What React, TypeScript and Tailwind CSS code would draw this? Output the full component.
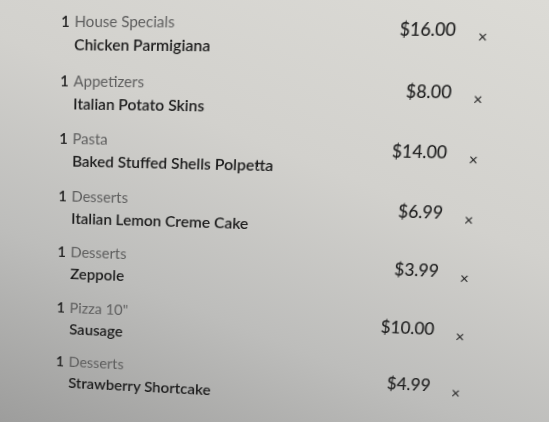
import React from "react";

const items = [
  { cat: "House Specials", name: "Chicken Parmigiana", price: "$16.00" },
  { cat: "Appetizers", name: "Italian Potato Skins", price: "$8.00" },
  { cat: "Pasta", name: "Baked Stuffed Shells Polpetta", price: "$14.00" },
  { cat: "Desserts", name: "Italian Lemon Creme Cake", price: "$6.99" },
  { cat: "Desserts", name: "Zeppole", price: "$3.99" },
  { cat: "Pizza 10\"", name: "Sausage", price: "$10.00" },
  { cat: "Desserts", name: "Strawberry Shortcake", price: "$4.99" },
];

export default function App() {
  return (
    <div
      className="w-[549px] h-[422px] overflow-hidden bg-[linear-gradient(22deg,#9d9d9c_0%,#bdbdbb_30%,#d2d1cd_60%,#dcdbd6_100%)]"
      style={{ fontFamily: "Lato, 'Open Sans', sans-serif" }}
    >
      <div className="mt-[14px] w-[549px] h-[410px] origin-center [transform:perspective(1000px)_rotateX(-8deg)_rotateY(-7.5deg)_rotate(0.6deg)_skewX(-2.1deg)]">
        <div className="pl-[50px] flex flex-col">
          {items.map((it, i) => (
            <div key={i} className="h-[58.5px] flex items-start">
              <div className="w-[14px] text-[15.5px] leading-[22px] text-[#1f1f1f] font-semibold">1</div>
              <div className="w-[305px] flex flex-col">
                <div className="text-[15.5px] leading-[22px] text-[#5e5e5e]">{it.cat}</div>
                <div className="text-[16px] leading-[24px] text-[#1c1c1c] font-semibold">{it.name}</div>
              </div>
              <div className="w-[71px] text-right text-[17px] leading-[22px] text-[#1e1e1e] mt-[7px] font-medium">
                {it.price}
              </div>
              <div className="w-[40px] pl-[21px] text-[15px] leading-[22px] text-[#222] mt-[13px]">×</div>
            </div>
          ))}
        </div>
      </div>
    </div>
  );
}
